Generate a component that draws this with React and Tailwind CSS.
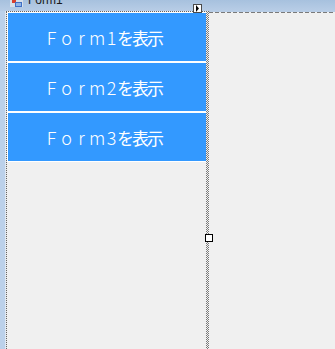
import React from 'react';

const forms = ['Form1', 'Form2', 'Form3'];

const ButtonLabel = ({ name }) => (
  <span className="flex items-center pr-[8px]">
    {name.split('').map((c, i) => (
      <span key={i} className="inline-block w-[15px] text-center text-[18px] font-light">{c}</span>
    ))}
    <span className="ml-[-2px] text-[17px] tracking-[-2px]">を表示</span>
  </span>
);

const App = () => {
  return (
    <div
      className="relative w-[335px] h-[349px] overflow-hidden bg-[#f0f0f0] flex flex-col"
      style={{ fontFamily: '"Noto Sans CJK JP", "Noto Sans", sans-serif' }}
    >
      {/* title bar, mostly scrolled out of view */}
      <div className="relative h-[11px] shrink-0 bg-gradient-to-b from-[#a7c1de] to-[#b8cde6]">
        <svg className="absolute left-[10px] top-0" width="13" height="7" viewBox="0 0 13 7">
          <rect x="0" y="0" width="13" height="7" fill="#d7dfe9" />
          <rect x="2" y="0" width="4" height="3" fill="#d8402f" />
          <rect x="5" y="2" width="7" height="5" fill="#3f6fc4" />
          <rect x="6" y="3" width="5" height="3" fill="#8fb3e6" />
        </svg>
        <span
          className="absolute left-[28px] top-[-6px] text-[12px] leading-none text-[#1a1a1a]"
          style={{ fontFamily: '"Liberation Sans", sans-serif' }}
        >
          Form1
        </span>
      </div>

      <div className="flex flex-1 min-h-0">
        {/* left window frame */}
        <div className="w-[5px] bg-[#bcd1ea]" />
        <div className="w-[1px] bg-[#dfe8f3]" />

        {/* docked panel */}
        <div className="w-[203px] flex flex-col">
          <div className="h-[1px] bg-[#f0f0f0] bg-[repeating-linear-gradient(90deg,#666_0_1px,transparent_1px_2px)]" />
          <div className="flex flex-1 min-h-0">
            <div className="w-[1px] bg-[repeating-linear-gradient(180deg,#666_0_1px,#e6e6e6_1px_2px)]" />
            <div className="w-[199px] flex flex-col">
              {forms.map((f) => (
                <button
                  key={f}
                  className="h-[50px] w-full bg-[#3399ff] border-l border-t border-b border-white flex items-center justify-center text-white leading-none"
                >
                  <ButtonLabel name={f} />
                </button>
              ))}
            </div>
            <div className="w-[3px] bg-[repeating-conic-gradient(#7a7a7a_0_25%,#f4f4f4_0_50%)] bg-[length:2px_2px]" />
          </div>
        </div>

        {/* rest of the form */}
        <div className="flex-1 flex flex-col">
          <div className="h-[1px] bg-[#b8cde6]" />
          <div className="h-[1px] bg-[repeating-linear-gradient(90deg,#7a7a7a_0_4px,transparent_4px_6px)]" />
        </div>
      </div>

      {/* smart tag glyph */}
      <div className="absolute left-[193px] top-[4px] w-[9px] h-[9px] bg-white border border-[#4a4a4a] flex items-center justify-center">
        <svg width="5" height="7" viewBox="0 0 5 7">
          <path d="M1 0 L4 3.5 L1 7 Z" fill="#000" />
        </svg>
      </div>

      {/* resize grab handle */}
      <div className="absolute left-[205px] top-[234px] w-[8px] h-[8px] bg-white border border-black" />
    </div>
  );
};

export default App;
